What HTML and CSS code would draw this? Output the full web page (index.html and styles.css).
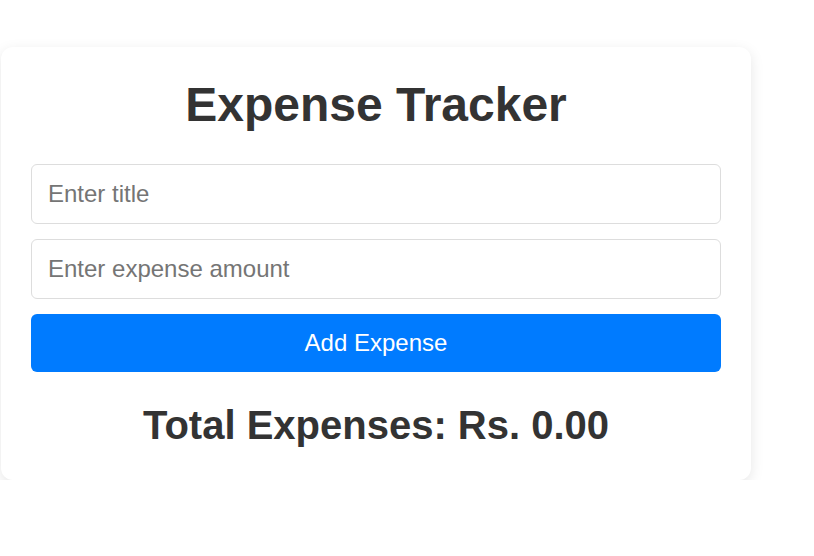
FILE: index.html
```html
<!DOCTYPE html>
<html lang="en">
<head>
<meta charset="utf-8">
<title>Expense Tracker</title>
<link rel="stylesheet" href="styles.css">
</head>
<body>
  <div class="card">
    <h1 class="title">Expense Tracker</h1>
    <form class="form" onsubmit="return false">
      <input class="field" type="text" placeholder="Enter title">
      <input class="field" type="number" placeholder="Enter expense amount">
      <button class="btn" type="submit">Add Expense</button>
    </form>
    <h2 class="total">Total Expenses: Rs. 0.00</h2>
  </div>
</body>
</html>
```
FILE: styles.css
```css
* { box-sizing: border-box; }
html, body { margin: 0; padding: 0; background: #fff; }
body {
  font-family: "Liberation Sans", Arial, sans-serif;
  color: #333;
}
.card {
  width: 750px;
  margin: 47px 0 0 1px;
  padding: 30px 30px 32px;
  background: #fff;
  border-radius: 12px;
  box-shadow: 0 4px 14px rgba(0, 0, 0, 0.1);
  display: flex;
  flex-direction: column;
}
.title {
  margin: 0 0 31px;
  font-size: 48px;
  line-height: 56px;
  font-weight: 700;
  text-align: center;
  color: #333;
}
.form {
  display: flex;
  flex-direction: column;
  gap: 15px;
}
.field {
  height: 60px;
  width: 100%;
  padding: 0 16px;
  border: 1px solid #ddd;
  border-radius: 6px;
  font-family: inherit;
  font-size: 24px;
  color: #333;
  outline: none;
  -moz-appearance: textfield;
}
.field::-webkit-outer-spin-button,
.field::-webkit-inner-spin-button { -webkit-appearance: none; margin: 0; }
.field::placeholder { color: #757575; }
.btn {
  height: 58px;
  width: 100%;
  border: none;
  border-radius: 6px;
  background: #007bff;
  color: #fff;
  font-family: inherit;
  font-size: 24px;
  cursor: pointer;
}
.total {
  margin: 30px 0 0;
  font-size: 40px;
  line-height: 46px;
  font-weight: 700;
  text-align: center;
  color: #333;
}
```
